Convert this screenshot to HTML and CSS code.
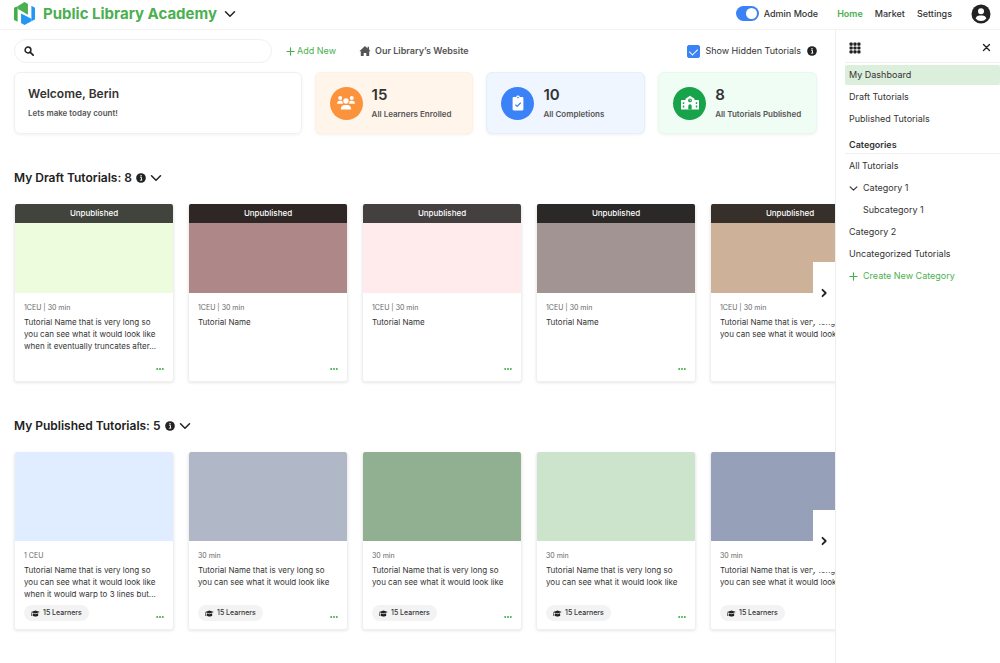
FILE: index.html
```html
<!DOCTYPE html>
<html lang="en">
<head>
    <meta charset="UTF-8">
    <meta name="viewport" content="width=device-width, initial-scale=1.0">
    <title>Public Library Academy</title>
    <link rel="stylesheet" href="styles.css">
</head>
<body>
    <!-- Shared icons -->
    <svg class="icon-sprite" aria-hidden="true">
        <symbol id="icon-chevron-down" viewBox="0 0 12 12">
            <path d="M1.5 3.8 6 8.3l4.5-4.5" fill="none" stroke="currentColor" stroke-width="1.5" stroke-linecap="round" stroke-linejoin="round"/>
        </symbol>
        <symbol id="icon-chevron-right" viewBox="0 0 12 12">
            <path d="m4.500 2.800 3.200 3.200-3.200 3.200" fill="none" stroke="currentColor" stroke-width="1.8" stroke-linecap="round" stroke-linejoin="round"/>
        </symbol>
        <symbol id="icon-info" viewBox="0 0 12 12">
            <circle cx="6" cy="6" r="5.8" fill="currentColor"/>
            <circle cx="6" cy="3.3" r=".9" fill="#fff"/>
            <path d="M4.9 5.2h1.7v3.2M4.7 8.6h2.8" fill="none" stroke="#fff" stroke-width="1.1"/>
        </symbol>
        <symbol id="icon-plus" viewBox="0 0 12 12">
            <path d="M6 1.2v9.6M1.2 6h9.6" fill="none" stroke="currentColor" stroke-width="1.6" stroke-linecap="round"/>
        </symbol>
        <symbol id="icon-dots" viewBox="0 0 8 4">
            <circle cx="1.2" cy="2" r="1" fill="currentColor"/>
            <circle cx="4" cy="2" r="1" fill="currentColor"/>
            <circle cx="6.8" cy="2" r="1" fill="currentColor"/>
        </symbol>
        <symbol id="icon-cap" viewBox="0 0 20 16">
            <path d="M10 1 20 4.6 10 8.2 2.4 5.5c-.5.9-.5 2-.4 3.200L2.800 13H0l.8-4.200C.6 7.200.8 6 1.300 5.100L0 4.600z" fill="currentColor"/>
            <path d="M4.200 7.600 10 9.700l5.800-2.100.5 4.900C15 14.200 12.600 15 10 15s-5-.8-6.300-2.500z" fill="currentColor"/>
        </symbol>
    </svg>

    <header class="topbar">
        <button type="button" class="brand">
            <svg class="brand-logo" viewBox="0 0 20 22" aria-hidden="true">
                <path d="M0 5.500 3.400 4v15L0 17.200z" fill="#3fae49"/>
                <path d="M3.400 4 10 0l3.300 1.800v10.400L3.400 6.500z" fill="#4caf50"/>
                <path d="M16.600 3.500 20 5.500v11.300L16.600 18.500z" fill="#2196f3"/>
                <path d="M6.700 11 16.600 16v2.500L10 22l-3.300-2z" fill="#2196f3"/>
            </svg>
            <span class="brand-name">Public Library Academy</span>
            <svg class="icon-lg" aria-hidden="true"><use href="#icon-chevron-down"/></svg>
        </button>
        <label class="admin-mode">
            <input type="checkbox" class="toggle" checked>
            Admin Mode
        </label>
        <nav class="main-nav">
            <a href="#" class="active">Home</a>
            <a href="#">Market</a>
            <a href="#">Settings</a>
        </nav>
        <button type="button" class="avatar" aria-label="Account">
            <svg viewBox="0 0 20 20" aria-hidden="true">
                <circle cx="10" cy="10" r="9.500" fill="#222"/>
                <circle cx="10" cy="7.300" r="3" fill="#fff"/>
                <path d="M4.600 14.500c.6-2 2.200-3 4-3h2.800c1.800 0 3.400 1 4 3A7 7 0 0 1 10 17a7 7 0 0 1-5.400-2.500z" fill="#fff"/>
            </svg>
        </button>
    </header>

    <div class="layout">
        <main class="content">
            <div class="toolbar">
                <div class="search">
                    <svg class="search-icon" viewBox="0 0 12 12" aria-hidden="true">
                        <circle cx="4.800" cy="4.800" r="3.500" fill="none" stroke="currentColor" stroke-width="1.800"/>
                        <path d="m7.600 7.600 3.400 3.400" stroke="currentColor" stroke-width="2" stroke-linecap="round"/>
                    </svg>
                    <input type="search" aria-label="Search tutorials">
                </div>
                <a href="#" class="add-new"><svg class="icon-sm" aria-hidden="true"><use href="#icon-plus"/></svg>Add New</a>
                <a href="#" class="website">
                    <svg class="icon-lg" viewBox="0 0 12 12" aria-hidden="true">
                        <path d="M6 1 .4 6.300h1.400v4.200c0 .4.200.6.600.6h2.300V8h2.600v3.100h2.300c.4 0 .6-.2.600-.6V6.300h1.400L10 4.600V1.700H8.600v1.700z" fill="currentColor"/>
                    </svg>
                    Our Library’s Website
                </a>
                <label class="show-hidden">
                    <input type="checkbox" class="checkbox" checked>
                    Show Hidden Tutorials
                </label>
                <svg class="icon" aria-hidden="true"><use href="#icon-info"/></svg>
            </div>

            <div class="stats">
                <section class="stat welcome">
                    <h1>Welcome, Berin</h1>
                    <p>Lets make today count!</p>
                </section>
                <section class="stat learners">
                    <span class="stat-icon">
                        <svg viewBox="0 0 20 16" aria-hidden="true" fill="#fff">
                            <circle cx="4.200" cy="3" r="2"/>
                            <circle cx="15.800" cy="3" r="2"/>
                            <circle cx="10" cy="6" r="2.700"/>
                            <path d="M1 8.800c0-2 1.200-3 2.800-3h1.400c.5 0 .9.100 1.200.3-.1 1.100.3 2 .9 2.700zM19 8.800c0-2-1.200-3-2.800-3h-1.400c-.5 0-.9.100-1.200.3.100 1.100-.3 2-.9 2.700zM4.800 14.500c0-3 1.600-4.600 3.900-4.600h2.600c2.300 0 3.900 1.600 3.900 4.600z"/>
                        </svg>
                    </span>
                    <div>
                        <strong>15</strong>
                        <p>All Learners Enrolled</p>
                    </div>
                </section>
                <section class="stat completions">
                    <span class="stat-icon">
                        <svg viewBox="0 0 20 16" aria-hidden="true">
                            <path d="M5.800 2h2.300a2 2 0 0 1 3.800 0h2.300c.7 0 1.200.5 1.200 1.200v11c0 .7-.5 1.200-1.200 1.200H5.800c-.7 0-1.200-.5-1.200-1.200v-11C4.600 2.500 5.100 2 5.800 2z" fill="#fff"/>
                            <circle cx="10" cy="2.600" r=".8" fill="#3b82f6"/>
                            <path d="m7.400 9.600 1.800 1.800 3.500-3.600" fill="none" stroke="#3b82f6" stroke-width="1.300"/>
                        </svg>
                    </span>
                    <div>
                        <strong>10</strong>
                        <p>All Completions</p>
                    </div>
                </section>
                <section class="stat published">
                    <span class="stat-icon">
                        <svg viewBox="0 0 20 16" aria-hidden="true">
                            <path d="M10 .8 14.500 3.800V5H18c.6 0 1 .4 1 1v8.500H1V6c0-.6.400-1 1-1h3.500V3.800z" fill="#fff"/>
                            <circle cx="10" cy="5.400" r="1.900" fill="#16a34a"/>
                            <path d="M10 4.300v1.300h1" fill="none" stroke="#fff" stroke-width=".6"/>
                            <path d="M8.300 14.500V11a1.700 1.700 0 0 1 3.400 0v3.500zM2.800 7.200h1.400v1.800H2.800zM2.800 10.600h1.400v1.800H2.800zM15.800 7.200h1.400v1.800h-1.400zM15.800 10.600h1.400v1.800h-1.400z" fill="#16a34a"/>
                        </svg>
                    </span>
                    <div>
                        <strong>8</strong>
                        <p>All Tutorials Published</p>
                    </div>
                </section>
            </div>

            <section class="shelf">
                <h2>
                    My Draft Tutorials: 8
                    <svg class="icon" aria-hidden="true"><use href="#icon-info"/></svg>
                    <svg class="icon-lg" aria-hidden="true"><use href="#icon-chevron-down"/></svg>
                </h2>
                <div class="shelf-row">
                    <div class="cards">
                        <article class="card lime">
                            <div class="cover"><span class="banner">Unpublished</span></div>
                            <p class="meta">1CEU | 30 min</p>
                            <h3>Tutorial Name that is very long so you can see what it would look like when it eventually truncates after...</h3>
                            <footer><button type="button" class="more" aria-label="More options"><svg aria-hidden="true"><use href="#icon-dots"/></svg></button></footer>
                        </article>
                        <article class="card rose">
                            <div class="cover"><span class="banner">Unpublished</span></div>
                            <p class="meta">1CEU | 30 min</p>
                            <h3>Tutorial Name</h3>
                            <footer><button type="button" class="more" aria-label="More options"><svg aria-hidden="true"><use href="#icon-dots"/></svg></button></footer>
                        </article>
                        <article class="card blush">
                            <div class="cover"><span class="banner">Unpublished</span></div>
                            <p class="meta">1CEU | 30 min</p>
                            <h3>Tutorial Name</h3>
                            <footer><button type="button" class="more" aria-label="More options"><svg aria-hidden="true"><use href="#icon-dots"/></svg></button></footer>
                        </article>
                        <article class="card taupe">
                            <div class="cover"><span class="banner">Unpublished</span></div>
                            <p class="meta">1CEU | 30 min</p>
                            <h3>Tutorial Name</h3>
                            <footer><button type="button" class="more" aria-label="More options"><svg aria-hidden="true"><use href="#icon-dots"/></svg></button></footer>
                        </article>
                        <article class="card tan">
                            <div class="cover"><span class="banner">Unpublished</span></div>
                            <p class="meta">1CEU | 30 min</p>
                            <h3>Tutorial Name that is very long so you can see what it would look like</h3>
                            <footer><button type="button" class="more" aria-label="More options"><svg aria-hidden="true"><use href="#icon-dots"/></svg></button></footer>
                        </article>
                    </div>
                    <button type="button" class="next" aria-label="Next tutorials"><svg class="icon-lg" aria-hidden="true"><use href="#icon-chevron-right"/></svg></button>
                </div>
            </section>

            <section class="shelf">
                <h2>
                    My Published Tutorials: 5
                    <svg class="icon" aria-hidden="true"><use href="#icon-info"/></svg>
                    <svg class="icon-lg" aria-hidden="true"><use href="#icon-chevron-down"/></svg>
                </h2>
                <div class="shelf-row">
                    <div class="cards">
                        <article class="card sky">
                            <div class="cover"></div>
                            <p class="meta">1 CEU</p>
                            <h3>Tutorial Name that is very long so you can see what it would look like when it would warp to 3 lines but...</h3>
                            <footer>
                                <span class="pill"><svg aria-hidden="true"><use href="#icon-cap"/></svg>15 Learners</span>
                                <button type="button" class="more" aria-label="More options"><svg aria-hidden="true"><use href="#icon-dots"/></svg></button>
                            </footer>
                        </article>
                        <article class="card slate">
                            <div class="cover"></div>
                            <p class="meta">30 min</p>
                            <h3>Tutorial Name that is very long so you can see what it would look like</h3>
                            <footer>
                                <span class="pill"><svg aria-hidden="true"><use href="#icon-cap"/></svg>15 Learners</span>
                                <button type="button" class="more" aria-label="More options"><svg aria-hidden="true"><use href="#icon-dots"/></svg></button>
                            </footer>
                        </article>
                        <article class="card sage">
                            <div class="cover"></div>
                            <p class="meta">30 min</p>
                            <h3>Tutorial Name that is very long so you can see what it would look like</h3>
                            <footer>
                                <span class="pill"><svg aria-hidden="true"><use href="#icon-cap"/></svg>15 Learners</span>
                                <button type="button" class="more" aria-label="More options"><svg aria-hidden="true"><use href="#icon-dots"/></svg></button>
                            </footer>
                        </article>
                        <article class="card mint">
                            <div class="cover"></div>
                            <p class="meta">30 min</p>
                            <h3>Tutorial Name that is very long so you can see what it would look like</h3>
                            <footer>
                                <span class="pill"><svg aria-hidden="true"><use href="#icon-cap"/></svg>15 Learners</span>
                                <button type="button" class="more" aria-label="More options"><svg aria-hidden="true"><use href="#icon-dots"/></svg></button>
                            </footer>
                        </article>
                        <article class="card steel">
                            <div class="cover"></div>
                            <p class="meta">30 min</p>
                            <h3>Tutorial Name that is very long so you can see what it would look like</h3>
                            <footer>
                                <span class="pill"><svg aria-hidden="true"><use href="#icon-cap"/></svg>15 Learners</span>
                                <button type="button" class="more" aria-label="More options"><svg aria-hidden="true"><use href="#icon-dots"/></svg></button>
                            </footer>
                        </article>
                    </div>
                    <button type="button" class="next" aria-label="Next tutorials"><svg class="icon-lg" aria-hidden="true"><use href="#icon-chevron-right"/></svg></button>
                </div>
            </section>
        </main>

        <aside class="sidebar">
            <div class="sidebar-head">
                <button type="button" aria-label="Grid view">
                    <svg class="icon-lg" viewBox="0 0 12 12" aria-hidden="true">
                        <g fill="currentColor">
                            <rect x=".5" y=".5" width="3.200" height="3.200" rx="1"/>
                            <rect x="4.400" y=".5" width="3.200" height="3.200" rx="1"/>
                            <rect x="8.300" y=".5" width="3.200" height="3.200" rx="1"/>
                            <rect x=".5" y="4.400" width="3.200" height="3.200" rx="1"/>
                            <rect x="4.400" y="4.400" width="3.200" height="3.200" rx="1"/>
                            <rect x="8.300" y="4.400" width="3.200" height="3.200" rx="1"/>
                            <rect x=".5" y="8.300" width="3.200" height="3.200" rx="1"/>
                            <rect x="4.400" y="8.300" width="3.200" height="3.200" rx="1"/>
                            <rect x="8.300" y="8.300" width="3.200" height="3.200" rx="1"/>
                        </g>
                    </svg>
                </button>
                <button type="button" aria-label="Close">
                    <svg class="icon-sm" viewBox="0 0 12 12" aria-hidden="true">
                        <path d="m2 2 8 8M10 2l-8 8" stroke="currentColor" stroke-width="1.800" stroke-linecap="round"/>
                    </svg>
                </button>
            </div>
            <nav>
                <ul>
                    <li><a href="#" class="active">My Dashboard</a></li>
                    <li><a href="#">Draft Tutorials</a></li>
                    <li><a href="#">Published Tutorials</a></li>
                </ul>
                <h2>Categories</h2>
                <ul>
                    <li><a href="#">All Tutorials</a></li>
                    <li><a href="#"><svg class="icon-sm" aria-hidden="true"><use href="#icon-chevron-down"/></svg>Category 1</a></li>
                    <li class="sub"><a href="#">Subcategory 1</a></li>
                    <li><a href="#">Category 2</a></li>
                    <li><a href="#">Uncategorized Tutorials</a></li>
                    <li><a href="#" class="create"><svg class="icon-sm" aria-hidden="true"><use href="#icon-plus"/></svg>Create New Category</a></li>
                </ul>
            </nav>
        </aside>
    </div>
</body>
</html>
```
FILE: styles.css
```css
* {
    box-sizing: border-box;
}
body {
    font-family: Inter, "Liberation Sans", sans-serif;
    font-size: 9px;
    line-height: 12px;
    color: #333;
    margin: 0;
    background-color: #fff;
    display: flex;
    flex-direction: column;
    min-height: 100vh;
}
h1, h2, h3, p, ul {
    margin: 0;
    padding: 0;
}
ul {
    list-style: none;
}
a {
    color: inherit;
    text-decoration: none;
}
button {
    font: inherit;
    color: inherit;
    background: none;
    border: none;
    padding: 0;
    cursor: pointer;
}
svg {
    display: block;
    flex: none;
}
.icon-sprite {
    display: none;
}
.icon-sm {
    width: 9px;
    height: 9px;
}
.icon {
    width: 10px;
    height: 10px;
    color: #222;
}
.icon-lg {
    width: 12px;
    height: 12px;
}

/* Top bar */
.topbar {
    display: flex;
    align-items: center;
    height: 30px;
    padding: 0 9px 2px 14px;
    border-bottom: 1px solid #f3f3f3;
    font-weight: 500;
}
.brand {
    display: flex;
    align-items: center;
    margin-right: auto;
    color: #222;
}
.brand-logo {
    width: 21px;
    height: 23px;
}
.brand-name {
    margin: 0 7px 0 8px;
    font-size: 15px;
    font-weight: 700;
    color: #4caf50;
}
.admin-mode {
    display: flex;
    align-items: center;
    gap: 5px;
}
.toggle {
    appearance: none;
    width: 23px;
    height: 15px;
    margin: 0;
    padding: 2px;
    border-radius: 8px;
    background-color: #ccc;
}
.toggle::after {
    content: "";
    display: block;
    width: 11px;
    height: 11px;
    border-radius: 50%;
    background-color: #fff;
}
.toggle:checked {
    background-color: #3b82f6;
}
.toggle:checked::after {
    margin-left: auto;
}
.main-nav {
    display: flex;
    gap: 12px;
    margin: 0 19px;
}
.main-nav .active {
    color: #4caf50;
    font-weight: 600;
}
.avatar svg {
    width: 20px;
    height: 20px;
}

/* Page columns */
.layout {
    display: flex;
    flex: 1;
}
.content {
    flex: 1;
    min-width: 0;
    padding: 9px 0 24px 14px;
}

/* Search and filters */
.toolbar {
    display: flex;
    align-items: center;
    margin-right: 18px;
}
.search {
    display: flex;
    align-items: center;
    width: 258px;
    height: 24px;
    padding: 0 9px;
    border: 1px solid #f0f0f0;
    border-radius: 12px;
    color: #222;
}
.search-icon {
    width: 10px;
    height: 10px;
}
.search input {
    flex: 1;
    min-width: 0;
    border: none;
    outline: none;
    background: none;
    font: inherit;
}
.add-new {
    display: flex;
    align-items: center;
    gap: 2px;
    margin-left: 14px;
    color: #4caf50;
}
.website {
    display: flex;
    align-items: center;
    gap: 4px;
    margin: 0 auto 0 23px;
    font-weight: 600;
    color: #555;
}
.show-hidden {
    display: flex;
    align-items: center;
    gap: 5px;
    margin-right: 6px;
}
.checkbox {
    appearance: none;
    width: 13px;
    height: 13px;
    margin: 0;
    border: 1px solid #3b82f6;
    border-radius: 2px;
}
.checkbox:checked {
    background-color: #3b82f6;
}
.checkbox:checked::after {
    content: "";
    display: block;
    width: 4px;
    height: 7px;
    margin: 1px auto;
    border: solid #fff;
    border-width: 0 1px 1px 0;
    transform: rotate(45deg);
}

/* Stat cards */
.stats {
    display: grid;
    grid-template-columns: 288fr 159fr 159fr 159fr;
    gap: 13px;
    margin: 9px 18px 36px 0;
}
.stat {
    display: flex;
    align-items: center;
    gap: 9px;
    height: 62px;
    padding: 0 14px;
    border: 1px solid #f0f0f0;
    border-radius: 6px;
    box-shadow: 0 1px 3px rgba(0, 0, 0, 0.06);
}
.stat p {
    margin-top: 5px;
    font-size: 8px;
    font-weight: 600;
    color: #555;
}
.stat strong {
    display: block;
    font-size: 15px;
    font-weight: 600;
    line-height: 16px;
}
.stat h1 {
    font-size: 12px;
    font-weight: 600;
    line-height: 16px;
}
.welcome {
    flex-direction: column;
    align-items: flex-start;
    justify-content: center;
    gap: 0;
    padding: 0 13px 2px;
}
.learners {
    background-color: #fff5eb;
    border-color: #fff0e0;
}
.completions {
    background-color: #eff6ff;
    border-color: #e3eefe;
}
.published {
    background-color: #f0fdf4;
    border-color: #e6faec;
}
.stat-icon {
    display: flex;
    align-items: center;
    justify-content: center;
    flex: none;
    width: 33px;
    height: 33px;
    border-radius: 50%;
}
.stat-icon svg {
    width: 20px;
    height: 16px;
}
.learners .stat-icon {
    background-color: #fb923c;
}
.completions .stat-icon {
    background-color: #3b82f6;
}
.published .stat-icon {
    background-color: #16a34a;
}

/* Tutorial shelves */
.shelf {
    margin-bottom: 28px;
}
.shelf h2 {
    display: flex;
    align-items: center;
    gap: 4px;
    font-size: 12px;
    font-weight: 600;
    line-height: 16px;
    color: #222;
}
.shelf-row {
    position: relative;
    margin-top: 10px;
}
.cards {
    display: flex;
    gap: 14px;
    margin-left: -14px;
    padding: 8px 0 8px 14px;
    overflow: hidden;
}
.card {
    display: flex;
    flex-direction: column;
    flex: 0 0 160px;
    height: 178px;
    border: 1px solid #f0f0f0;
    border-top: none;
    border-radius: 3px;
    box-shadow: 0 1px 3px rgba(0, 0, 0, 0.1);
    overflow: hidden;
}
.cover {
    height: 89px;
    flex: none;
}
.banner {
    display: block;
    font-size: 8px;
    font-weight: 500;
    line-height: 19px;
    text-align: center;
    color: #fff;
    background-color: #333;
}
.meta {
    margin: 9px 9px 2px;
    font-size: 7px;
    color: #666;
}
.card h3 {
    margin: 0 9px;
    font-size: 8px;
    font-weight: 400;
}
.card footer {
    display: flex;
    align-items: center;
    margin: auto 9px 8px;
    height: 16px;
}
.pill {
    display: flex;
    align-items: center;
    gap: 3px;
    height: 16px;
    padding: 0 7px;
    border-radius: 8px;
    font-size: 7px;
    font-weight: 500;
    background-color: #f3f3f3;
}
.pill svg {
    width: 9px;
    height: 7px;
    color: #222;
}
.more {
    align-self: flex-end;
    margin: 0 0 2px auto;
    color: #3fae49;
}
.more svg {
    width: 8px;
    height: 4px;
}
.next {
    position: absolute;
    right: 0;
    top: 66px;
    display: flex;
    align-items: center;
    justify-content: center;
    width: 22px;
    height: 62px;
    background-color: #fff;
    color: #222;
}
.lime .cover { background-color: #edfcdc; }
.lime .banner { background-color: #40443c; }
.rose .cover { background-color: #ae8888; }
.rose .banner { background-color: #2f2626; }
.blush .cover { background-color: #ffebeb; }
.blush .banner { background-color: #444040; }
.taupe .cover { background-color: #a29492; }
.taupe .banner { background-color: #2b2828; }
.tan .cover { background-color: #cdb299; }
.tan .banner { background-color: #372f29; }
.sky .cover { background-color: #e0ecff; }
.slate .cover { background-color: #b0b7c7; }
.sage .cover { background-color: #91b091; }
.mint .cover { background-color: #cce4cc; }
.steel .cover { background-color: #96a1b9; }

/* Sidebar */
.sidebar {
    flex: none;
    width: 165px;
    padding-left: 9px;
    border-left: 1px solid #eee;
}
.sidebar-head {
    display: flex;
    align-items: center;
    justify-content: space-between;
    height: 33px;
    margin-bottom: 2px;
    padding: 3px 9px 0 4px;
    border-bottom: 1px solid #f0f0f0;
    color: #222;
}
.sidebar li {
    margin-bottom: 2px;
}
.sidebar li a {
    display: flex;
    align-items: center;
    gap: 5px;
    height: 20px;
    padding-left: 4px;
    border-radius: 2px;
}
.sidebar li .active {
    background-color: #dceedc;
}
.sidebar .sub {
    padding-left: 14px;
}
.sidebar .create {
    color: #4caf50;
}
.sidebar h2 {
    margin-bottom: 2px;
    padding: 8px 0 2px 4px;
    border-bottom: 1px solid #f0f0f0;
    font-size: 9px;
    font-weight: 600;
}
```
